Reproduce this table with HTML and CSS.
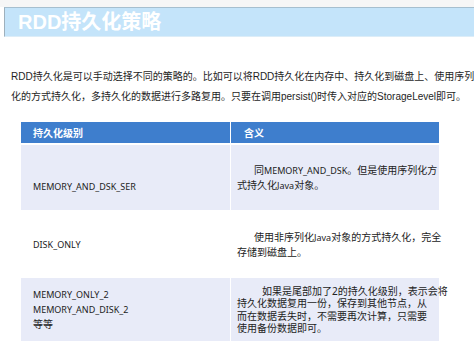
FILE: index.html
```html
<!DOCTYPE html>
<html lang="zh">
<head>
<meta charset="utf-8">
<link rel="stylesheet" href="styles.css">
</head>
<body>
<div class="strip"></div>
<h1 class="title">RDD持久化策略</h1>
<p class="intro">RDD持久化是可以手动选择不同的策略的。比如可以将RDD持久化在内存中、持久化到磁盘上、使用序列<br>化的方式持久化，多持久化的数据进行多路复用。只要在调用persist()时传入对应的StorageLevel即可。</p>
<div class="table">
  <div class="th">持久化级别</div>
  <div class="th">含义</div>

  <div class="td left r1 shade"><span class="lat">MEMORY_AND_DSK_SER</span></div>
  <div class="td right r1 shade"><div class="txt lh14"><span class="ind"></span>同<span class="lat">MEMORY_AND_DSK</span>。但是使用序列化方<br>式持久化<span class="lat">Java</span>对象。</div></div>

  <div class="td left r2"><span class="lat">DISK_ONLY</span></div>
  <div class="td right r2"><div class="txt lh14"><span class="ind"></span>使用非序列化<span class="lat">Java</span>对象的方式持久化，完全<br>存储到磁盘上。</div></div>

  <div class="td left r3 shade"><div class="lines"><span class="lat">MEMORY_ONLY_2</span><br><span class="lat">MEMORY_AND_DISK_2</span><br>等等</div></div>
  <div class="td right r3 shade"><div class="txt lh12"><span class="ind2"></span>如果是尾部加了2的持久化级别，表示会将<br>持久化数据复用一份，保存到其他节点，从<br>而在数据丢失时，不需要再次计算，只需要<br>使用备份数据即可。</div></div>
</div>
</body>
</html>
```

FILE: styles.css
```css
html, body {
  margin: 0;
  padding: 0;
  background: #ffffff;
}

body {
  width: 474px;
  height: 353px;
  overflow: hidden;
  font-family: "Liberation Sans", "Noto Sans CJK SC", sans-serif;
  color: #222;
}

.strip {
  height: 7px;
  background: #f6f6f6;
}

.title {
  margin: 0 0 0 4px;
  height: 28px;
  border-top: 1px solid #a6bfcf;
  border-left: 1px solid #9eb0bc;
  border-bottom: 1px solid #dcedf8;
  background: #c4e4fa;
  padding-left: 13px;
  font-family: "Liberation Sans", "Noto Sans CJK SC", sans-serif;
  font-weight: bold;
  font-size: 20px;
  line-height: 28px;
  color: #ffffff;
}

.intro {
  margin: 30px 0 0 11px;
  font-size: 10px;
  line-height: 20px;
  white-space: nowrap;
  color: #1e1e1e;
}

.table {
  margin: 15px 0 0 21px;
  width: 418px;
  display: grid;
  grid-template-columns: 209px 208px;
  grid-template-rows: 23px 65px 68px 63px;
  column-gap: 1px;
  row-gap: 0;
  font-family: "Noto Sans", "Noto Sans CJK SC", sans-serif;
  font-size: 10px;
  color: #222;
}

.th {
  background: #3e7ecd;
  color: #ffffff;
  font-weight: bold;
  font-family: "Noto Sans CJK SC", sans-serif;
  display: flex;
  align-items: center;
  padding-left: 12px;
  border-bottom: 2px solid #ffffff;
}

.th + .th {
  padding-left: 13px;
}

.td {
  display: flex;
  align-items: center;
}

.shade {
  background: #e8ebf8;
}

.left {
  padding-left: 12px;
}

.left.r1 {
  padding-top: 17px;
}

.right {
  padding-left: 6px;
}

.lat {
  font-family: "Noto Sans", sans-serif;
  font-size: 9px;
}

.lines {
  line-height: 15px;
}

.txt {
  white-space: nowrap;
}

.lh14 {
  line-height: 14px;
}

.lh12 {
  line-height: 12.5px;
}

.ind {
  display: inline-block;
  width: 17px;
}

.ind2 {
  display: inline-block;
  width: 25px;
}
```
